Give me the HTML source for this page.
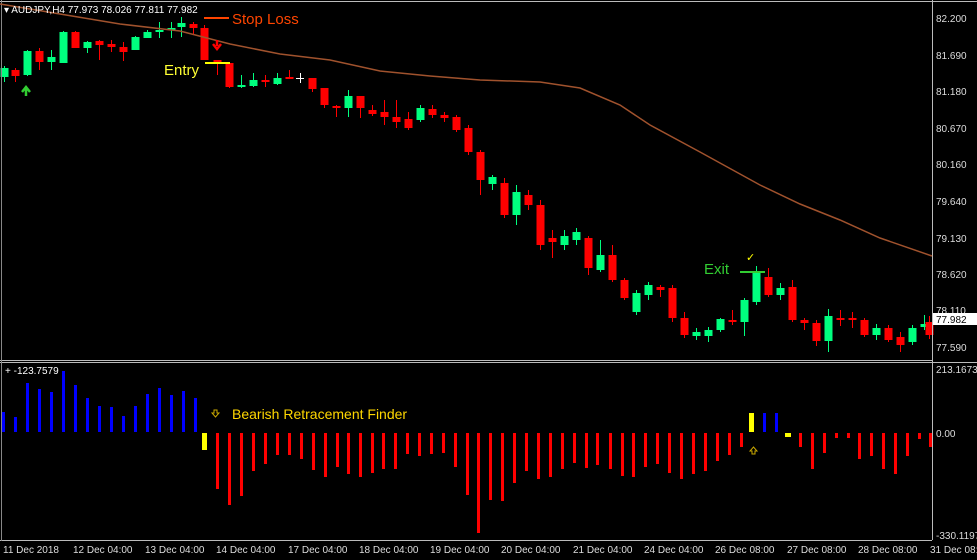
<!DOCTYPE html>
<html><head><meta charset="utf-8"><style>
html,body{margin:0;padding:0;background:#000;}
svg{display:block}
text{font-family:"Liberation Sans",sans-serif}
</style></head><body>
<svg id="s" width="977" height="560" viewBox="0 0 977 560" xmlns="http://www.w3.org/2000/svg">
<rect width="977" height="560" fill="#000"/>
<g id="g"></g>
<!-- borders -->
<line x1="0" y1="1.5" x2="977" y2="1.5" stroke="#bbb" stroke-width="1"/>
<line x1="0" y1="360.5" x2="932" y2="360.5" stroke="#bbb"/>
<line x1="0" y1="362.5" x2="977" y2="362.5" stroke="#bbb"/>
<line x1="0" y1="540.5" x2="932" y2="540.5" stroke="#bbb"/>
<line x1="932.5" y1="0" x2="932.5" y2="540" stroke="#bbb"/>
<line x1="1.5" y1="0" x2="1.5" y2="541" stroke="#888"/>
<!-- MA -->
<polyline fill="none" stroke="#a0522d" stroke-width="1.5" points="0,4 60,14 120,24 180,31 230,44 280,54 330,60 380,71 430,76 480,80 540,82 580,88 620,105 650,125 700,152 760,185 800,204 840,220 880,238 932,256"/>
<!-- annotations -->
<line x1="204" y1="18" x2="229" y2="18" stroke="#ff4500" stroke-width="2"/>
<text x="232" y="24" fill="#ff4500" font-size="15">Stop Loss</text>
<text x="164" y="75" fill="#ffff33" font-size="15">Entry</text>
<line x1="205" y1="63" x2="230" y2="63" stroke="#ffff00" stroke-width="2"/>
<text x="704" y="274" fill="#32cd32" font-size="15">Exit</text>
<line x1="740" y1="272" x2="765" y2="272" stroke="#32cd32" stroke-width="2"/>
<text x="746" y="261" fill="#ffff00" font-size="11">✓</text>
<path d="M217 40 l0 6 m-4 -2 l4 5 l4 -5" stroke="#ff0000" stroke-width="2.5" fill="none"/>
<path d="M26 96 l0 -8 m-4 4 l4 -5 l4 5" stroke="#32cd32" stroke-width="2.5" fill="none"/>
<text x="4" y="13" fill="#fff" font-size="10">▾ AUDJPY,H4  77.973 78.026 77.811 77.982</text>
<text x="5" y="374" fill="#fff" font-size="10">+ -123.7579</text>
<text x="232" y="419" fill="#ffd700" font-size="14">Bearish Retracement Finder</text>
<path d="M214 410 h3 v3 h2 l-3.5 4 l-3.5 -4 h2z" stroke="#ccaa00" fill="none"/>
<path d="M752 454 h3 v-3 h2 l-3.5 -4 l-3.5 4 h2z" stroke="#ccaa00" fill="none"/>
<!-- price axis -->
<g fill="#ddd" font-size="10">
<text x="936" y="22">82.200</text><text x="936" y="59">81.690</text><text x="936" y="95">81.180</text>
<text x="936" y="132">80.670</text><text x="936" y="168">80.160</text><text x="936" y="205">79.640</text>
<text x="936" y="242">79.130</text><text x="936" y="278">78.620</text><text x="936" y="314">78.110</text>
<text x="936" y="351">77.590</text>
<text x="936" y="373">213.1673</text><text x="936" y="437">0.00</text><text x="936" y="539">-330.1197</text>
</g>
<rect x="933" y="313" width="44" height="12" fill="#fff"/>
<text x="936" y="323" fill="#000" font-size="10">77.982</text>
<g fill="#ddd" font-size="10">
<text x="3" y="553">11 Dec 2018</text><text x="73" y="553">12 Dec 04:00</text><text x="145" y="553">13 Dec 04:00</text>
<text x="216" y="553">14 Dec 04:00</text><text x="288" y="553">17 Dec 04:00</text><text x="359" y="553">18 Dec 04:00</text>
<text x="430" y="553">19 Dec 04:00</text><text x="501" y="553">20 Dec 04:00</text><text x="573" y="553">21 Dec 04:00</text>
<text x="644" y="553">24 Dec 04:00</text><text x="715" y="553">26 Dec 08:00</text><text x="787" y="553">27 Dec 08:00</text>
<text x="858" y="553">28 Dec 08:00</text><text x="930" y="553">31 Dec 08:</text>
</g>
</svg>
<script>
var g=document.getElementById('g'),h='';
var C=[[4,77,68,66,82],[15,70,76,68,82],[27,75,51,50,76],[39,51,62,48,70],[51,62,57,50,70],[63,63,32,31,63],[75,32,48,31,48],[87,48,42,41,53],[99,41,45,40,60],[111,44,47,40,52],[123,47,52,42,61],[135,50,37,36,50],[147,38,32,30,38],[159,32,30,22,38],[171,30,28,22,38],[181,27,23,17,37],[193,24,28,22,35],[204,28,60,25,60],[217,60,62,60,75],[229,63,87,63,88],[241,87,85,75,88],[253,86,80,73,87],[265,80,82,75,87],[277,84,78,73,85],[289,77,79,70,79],[300,78,78,73,83,1],[312,78,89,78,92],[324,88,105,88,108],[336,106,108,105,117],[348,108,96,90,117],[360,96,108,96,118],[372,110,114,105,116],[384,112,117,100,125],[396,117,122,100,128],[408,119,128,112,130],[420,120,108,105,122],[432,109,115,105,118],[444,115,118,112,122],[456,117,130,115,132],[468,128,152,125,155],[480,152,180,150,195],[492,184,177,175,190],[504,183,215,178,218],[516,215,192,185,225],[528,195,205,190,210],[540,205,245,200,250],[552,238,242,230,258],[564,245,236,230,250],[576,240,232,228,245],[588,238,268,236,275],[600,270,255,240,272],[612,255,280,245,282],[624,280,298,278,300],[636,312,293,290,315],[648,295,285,282,300],[660,287,290,285,297],[672,288,318,285,322],[684,318,335,312,338],[696,336,332,328,340],[708,336,330,327,342],[720,330,319,318,332],[732,320,322,310,325],[744,322,300,298,336],[756,302,273,266,305],[768,277,295,268,297],[780,295,288,283,300],[792,287,320,280,322],[804,320,323,318,330],[816,323,341,320,346],[828,341,316,309,352],[840,318,320,310,326],[852,318,320,312,328],[864,320,335,318,337],[876,335,328,324,340],[888,328,340,325,342],[900,337,345,332,352],[912,342,328,325,345],[924,327,324,315,330],[929,322,335,316,339]];
C.forEach(function(c){var x=c[0],o=c[1],cl=c[2],hi=c[3],lo=c[4];
 if(c[5]){h+='<path d="M'+(x-4)+' '+o+'.5h8M'+x+'.5 '+hi+'V'+lo+'" stroke="#fff"/>';return;}
 var up=cl<o,col=up?'#00ff7f':'#ff0000',t=Math.min(o,cl),b=Math.max(o,cl);if(b-t<2)b=t+2;
 h+='<line x1="'+(x+.5)+'" y1="'+hi+'" x2="'+(x+.5)+'" y2="'+lo+'" stroke="'+col+'"/>';
 h+='<rect x="'+(x-3.5)+'" y="'+t+'" width="8" height="'+(b-t)+'" fill="'+col+'"/>';});
var B=[412,417,383,389,392,371,385,398,406,407,416,406,394,388,395,391,398];
B.forEach(function(t,i){h+='<rect x="'+(2+i*12)+'" y="'+t+'" width="3" height="'+(432-t)+'" fill="#0000ff"/>';});
h+='<rect x="202" y="433" width="5" height="17" fill="#ffff00"/>';
var R=[[217,489],[229,505],[241,496],[253,471],[265,464],[277,455],[289,455],[301,459],[313,470],[325,477],[337,467],[348,474],[360,477],[372,473],[383,469],[395,469],[407,454],[419,456],[431,454],[443,453],[455,467],[467,495],[478,533],[490,500],[502,501],[514,483],[526,471],[538,479],[550,477],[562,469],[574,463],[586,468],[597,465],[610,469],[622,476],[633,477],[645,467],[657,464],[669,473],[681,479],[693,474],[705,471],[717,461],[729,455],[741,447],[800,447],[812,469],[824,453],[836,438],[848,438],[859,459],[871,456],[883,469],[895,474],[907,456],[919,439],[930,447]];
R.forEach(function(r){h+='<rect x="'+(r[0]-1)+'" y="433" width="3" height="'+(r[1]-433)+'" fill="#ff0000"/>';});
h+='<rect x="749" y="413" width="5" height="19" fill="#ffff00"/><rect x="763" y="413" width="3" height="19" fill="#0000ff"/><rect x="775" y="413" width="3" height="19" fill="#0000ff"/><rect x="785" y="433" width="6" height="4" fill="#ffff00"/>';
g.innerHTML=h;
</script>
</body></html>
